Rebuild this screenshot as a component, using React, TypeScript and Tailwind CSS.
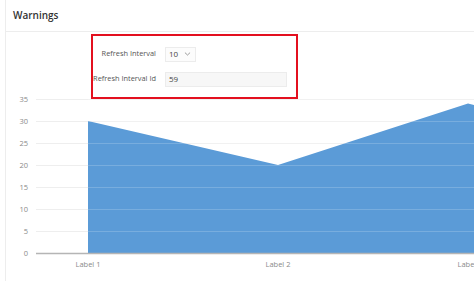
import React from "react";

const yVals = [35, 30, 25, 20, 15, 10, 5];
const yOf = (v: number) => 164 - v * 4.4;

function Chart() {
  const pts = [
    [82, yOf(30)],
    [272, yOf(20)],
    [462, yOf(34)],
    [652, yOf(22)],
  ];
  const poly =
    `82,164 ` + pts.map((p) => `${p[0]},${p[1]}`).join(" ") + ` 652,164`;
  return (
    <svg width="600" height="192" className="block -mt-[10px] shrink-0" style={{ fontFamily: "'Open Sans', sans-serif" }}>
      {yVals.map((v) => (
        <line key={"g" + v} x1={30} x2={600} y1={yOf(v) + 0.5} y2={yOf(v) + 0.5} stroke="#eeeeee" strokeWidth={1} />
      ))}
      <polygon points={poly} fill="#5b9bd7" />
      {yVals.map((v) => (
        <line key={"o" + v} x1={82} x2={600} y1={yOf(v) + 0.5} y2={yOf(v) + 0.5} stroke="#ffffff" strokeOpacity={0.18} strokeWidth={1} />
      ))}
      <line x1={30} x2={600} y1={164.5} y2={164.5} stroke="#b5b5b5" strokeWidth={1.5} />
      {[...yVals, 0].map((v) => (
        <text key={"t" + v} x={22} y={yOf(v) + 2.7} textAnchor="end" fontSize={7.5} fill="#8a8a8a">
          {v}
        </text>
      ))}
      {[
        [82, "Label 1"],
        [272, "Label 2"],
        [464, "Label 3"],
      ].map(([x, l]) => (
        <text key={l as string} x={x as number} y={178} textAnchor="middle" fontSize={7.5} fill="#8a8a8a">
          {l}
        </text>
      ))}
    </svg>
  );
}

export default function App() {
  return (
    <div className="w-[474px] h-[281px] overflow-hidden bg-white font-['Open_Sans',sans-serif]">
      <div className="ml-[5px] w-[600px] h-full border-l border-[#ededed] flex flex-col">
        <div className="h-[32px] shrink-0 border-b border-[#ededed] flex items-center pl-[7px] text-[10px] font-semibold text-[#333]">
          Warnings
        </div>
        <div className="relative z-10 mt-[2px] ml-[85px] w-[207px] h-[65px] shrink-0 border-2 border-[#e3101f] flex flex-col justify-center gap-[10px] text-[7.4px] text-[#555]">
          <div className="flex items-center">
            <div className="w-[63px] flex justify-end whitespace-nowrap">Refresh Interval</div>
            <div className="ml-[9px] w-[31px] h-[15px] border border-[#ececec] bg-[#fcfcfc] flex items-center pl-[3px] text-[#444] text-[8px]">
              <span>10</span>
              <svg width="7" height="4" viewBox="0 0 8 5" className="ml-[6px]">
                <path d="M0.8 0.8 L4 3.8 L7.2 0.8" fill="none" stroke="#777" strokeWidth="0.9" />
              </svg>
            </div>
          </div>
          <div className="flex items-center">
            <div className="w-[63px] flex justify-end whitespace-nowrap">Refresh Interval Id</div>
            <div className="ml-[9px] w-[122px] h-[15px] border border-[#ececec] bg-[#f7f7f7] flex items-center pl-[3px] text-[#444] text-[8px]">
              59
            </div>
          </div>
        </div>
        <Chart />
      </div>
    </div>
  );
}
